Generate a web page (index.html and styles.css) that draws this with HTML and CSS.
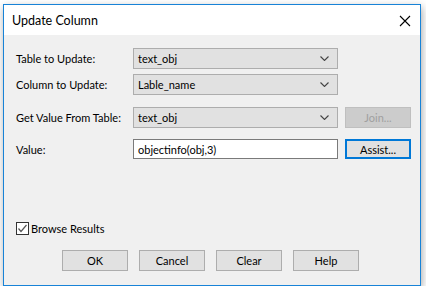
FILE: index.html
```html
<!DOCTYPE html>
<html lang="en">
<head>
    <meta charset="UTF-8">
    <title>Update Column</title>
    <link rel="stylesheet" href="styles.css">
</head>
<body>
    <div class="dialog">
        <div class="title-bar">
            <span class="title">Update Column</span>
            <svg class="close" width="12" height="12" viewBox="0 0 12 12">
                <path d="M1 1 L11 11 M11 1 L1 11" stroke="#000" stroke-width="1.1" fill="none"/>
            </svg>
        </div>

        <div class="client">
            <div class="form-grid">
                <label class="row-1">Table to Update:</label>
                <div class="combo row-1">
                    <span>text_obj</span>
                    <svg class="arrow" width="9" height="5" viewBox="0 0 9 5"><path d="M0.5 0.5 L4.5 4.5 L8.5 0.5" stroke="#444" stroke-width="1.1" fill="none"/></svg>
                </div>
                <div class="row-1"></div>

                <label class="row-2">Column to Update:</label>
                <div class="combo row-2">
                    <span>Lable_name</span>
                    <svg class="arrow" width="9" height="5" viewBox="0 0 9 5"><path d="M0.5 0.5 L4.5 4.5 L8.5 0.5" stroke="#444" stroke-width="1.1" fill="none"/></svg>
                </div>
                <div class="row-2"></div>

                <label class="row-3">Get Value From Table:</label>
                <div class="combo row-3">
                    <span>text_obj</span>
                    <svg class="arrow" width="9" height="5" viewBox="0 0 9 5"><path d="M0.5 0.5 L4.5 4.5 L8.5 0.5" stroke="#444" stroke-width="1.1" fill="none"/></svg>
                </div>
                <button class="btn btn-disabled row-3">Join...</button>

                <label class="row-4">Value:</label>
                <div class="text-input row-4">objectinfo(obj,3)</div>
                <button class="btn btn-default row-4">Assist...</button>
            </div>

            <div class="check-row">
                <span class="checkbox">
                    <svg width="11" height="11" viewBox="0 0 11 11"><path d="M1.5 5.5 L4 8.5 L9.5 2" stroke="#555" stroke-width="1.2" fill="none"/></svg>
                </span>
                <span>Browse Results</span>
            </div>

            <div class="button-row">
                <button class="btn">OK</button>
                <button class="btn">Cancel</button>
                <button class="btn">Clear</button>
                <button class="btn">Help</button>
            </div>
        </div>
    </div>
</body>
</html>
```

FILE: styles.css
```css
body {
    margin: 0;
    padding: 4px 0 0 3px;
    background: #ffffff;
    font-family: Lato, 'Noto Sans', sans-serif;
    font-size: 11px;
    color: #000;
}

.dialog {
    width: 416px;
    height: 280px;
    border: 1px solid #1883d7;
    background: #f0f0f0;
    box-shadow: 1px 3px 8px rgba(0, 0, 0, 0.35);
    display: flex;
    flex-direction: column;
}

.title-bar {
    height: 30px;
    background: #ffffff;
    display: flex;
    align-items: center;
    justify-content: space-between;
    padding: 0 9px 0 8px;
}

.title {
    font-size: 12.5px;
}

.close {
    margin-top: 1px;
}

.client {
    flex: 1;
    padding: 13px 12px 0 12px;
    display: flex;
    flex-direction: column;
}

.form-grid {
    display: grid;
    grid-template-columns: 110px 205px 66px;
    column-gap: 7px;
    align-items: center;
}

.row-2 { margin-top: 5px; }
.row-3 { margin-top: 12px; }
.row-4 { margin-top: 11px; }

.form-grid label {
    white-space: nowrap;
}

.combo {
    height: 21px;
    box-sizing: border-box;
    border: 1px solid #adadad;
    background: #e1e1e1;
    display: flex;
    align-items: center;
    justify-content: space-between;
    padding: 0 8px 0 4px;
}

.text-input {
    height: 20px;
    box-sizing: border-box;
    border: 1px solid #7a7a7a;
    background: #ffffff;
    display: flex;
    align-items: center;
    padding: 0 4px;
}

.btn {
    height: 21px;
    width: 66px;
    box-sizing: border-box;
    border: 1px solid #adadad;
    background: #e1e1e1;
    font-family: inherit;
    font-size: inherit;
    color: #000;
    padding: 0;
}

.btn-disabled {
    background: #cccccc;
    border-color: #bfbfbf;
    color: #a0a0a0;
}

.btn-default {
    height: 20px;
    border: 2px solid #0078d7;
}

.check-row {
    height: 14px;
    display: flex;
    align-items: center;
    gap: 2px;
    margin-top: 62px;
}

.checkbox {
    width: 13px;
    height: 13px;
    box-sizing: border-box;
    border: 1px solid #333;
    background: #ffffff;
    display: flex;
    align-items: center;
    justify-content: center;
}

.button-row {
    display: flex;
    gap: 11px;
    margin-top: 15px;
    padding-left: 46px;
}
```
